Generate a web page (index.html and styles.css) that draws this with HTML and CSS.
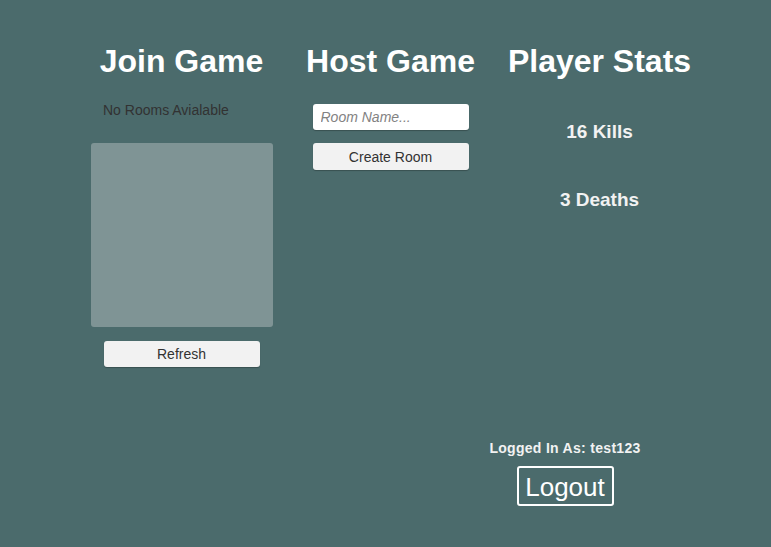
FILE: index.html
```html
<!DOCTYPE html>
<html lang="en">
<head>
  <meta charset="UTF-8" />
  <title>Lobby</title>
  <link rel="stylesheet" href="styles.css">
</head>
<body>
  <div class="lobby">
    <div class="column join">
      <h2>Join Game</h2>
      <p class="no-rooms">No Rooms Avialable</p>
      <div class="room-list"></div>
      <button class="btn refresh">Refresh</button>
    </div>

    <div class="column host">
      <h2>Host Game</h2>
      <input type="text" class="room-name" placeholder="Room Name..." />
      <button class="btn create">Create Room</button>
    </div>

    <div class="column stats">
      <h2>Player Stats</h2>
      <p class="stat kills">16 Kills</p>
      <p class="stat deaths">3 Deaths</p>
    </div>
  </div>

  <div class="account">
    <p class="logged-in">Logged In As: test123</p>
    <button class="logout">Logout</button>
  </div>
</body>
</html>
```

FILE: styles.css
```css
body {
  margin: 0;
  height: 547px;
  overflow: hidden;
  background-color: #4b6b6c;
  font-family: "Liberation Sans", Arial, sans-serif;
  color: #fff;
}

.lobby {
  display: grid;
  grid-template-columns: repeat(3, 209px);
  padding: 41px 0 0 77px;
}

.column {
  display: flex;
  flex-direction: column;
  align-items: center;
}

.column h2 {
  margin: 0;
  font-size: 32px;
  line-height: 40px;
  font-weight: bold;
  white-space: nowrap;
}

.no-rooms {
  align-self: stretch;
  margin: 21px 0 0;
  padding-left: 26px;
  font-size: 14px;
  line-height: 16px;
  color: #323232;
}

.room-list {
  width: 182px;
  height: 184px;
  margin-top: 25px;
  background-color: #7f9495;
  border-radius: 3px;
}

.btn {
  width: 156px;
  height: 26px;
  padding: 0;
  border: none;
  border-radius: 3px;
  background-color: #f2f2f2;
  color: #323232;
  font-family: inherit;
  font-size: 14px;
  box-shadow: 0 1px 1px rgba(0, 0, 0, 0.25);
}

.refresh {
  margin-top: 14px;
}

.room-name {
  box-sizing: border-box;
  width: 156px;
  height: 26px;
  margin-top: 23px;
  padding: 0 8px;
  border: none;
  border-radius: 3px;
  background-color: #fff;
  font-family: inherit;
  font-size: 14px;
  outline: none;
  box-shadow: 0 1px 1px rgba(0, 0, 0, 0.25);
}

.room-name::placeholder {
  color: #828282;
  font-style: italic;
}

.create {
  height: 27px;
  margin-top: 13px;
}

.stat {
  margin: 0;
  font-size: 19px;
  line-height: 22px;
  font-weight: bold;
  color: #f2f2f2;
}

.kills {
  margin-top: 40px;
}

.deaths {
  margin-top: 46px;
}

.account {
  width: 200px;
  margin: 73px 0 0 465px;
  display: flex;
  flex-direction: column;
  align-items: center;
}

.logged-in {
  margin: 0;
  font-size: 14px;
  line-height: 16px;
  font-weight: bold;
  color: #f2f2f2;
  letter-spacing: 0.3px;
}

.logout {
  box-sizing: border-box;
  width: 97px;
  height: 40px;
  margin-top: 10px;
  padding: 2px 0 0;
  border: 2px solid #fff;
  border-radius: 3px;
  background: transparent;
  color: #fff;
  font-family: inherit;
  font-size: 26px;
}
```
